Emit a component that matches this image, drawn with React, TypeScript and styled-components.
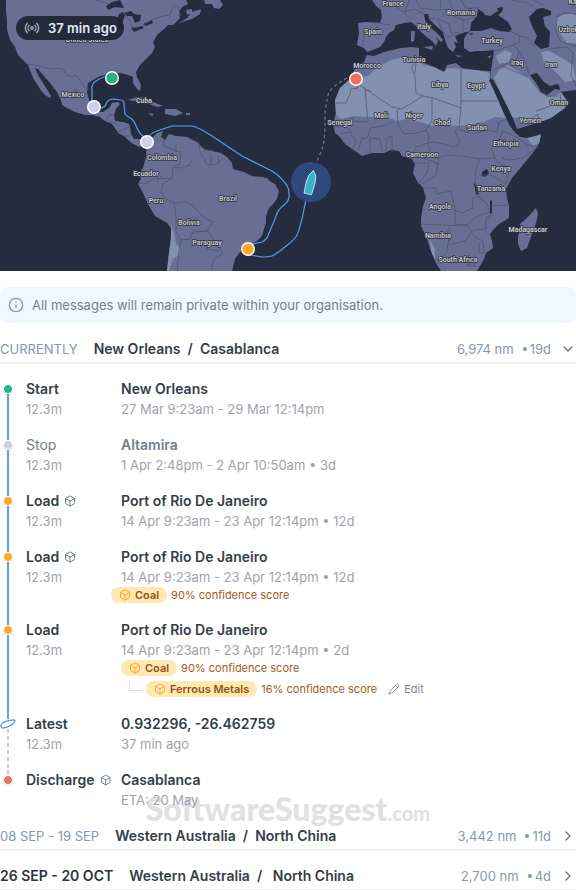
import React from "react";
import styled, { createGlobalStyle, css } from "styled-components";
import { Box, ChevronDown, ChevronRight, Info, Pencil, Radio } from "lucide-react";

const GlobalStyle = createGlobalStyle`
  * { box-sizing: border-box; }
  body {
    margin: 0;
    background: #ffffff;
    color: #37424d;
    font-family: Inter, "Liberation Sans", sans-serif;
    font-size: 14px;
    line-height: 20px;
  }
  button {
    border: 0;
    padding: 0;
    background: none;
    font: inherit;
    color: inherit;
    text-align: left;
    cursor: pointer;
  }
`;

/* ---------- Map ---------- */

const MapPanel = styled.section`
  position: relative;
  overflow: hidden;
  background: #262c3f;
`;

const MapDrawing = styled.svg`
  display: block;
  width: 100%;
  height: auto;
`;

const Land = styled.path`
  fill: #696f94;
`;

const Desert = styled.path`
  fill: #8490b0;
`;

const Water = styled.path`
  fill: #262c3f;
`;

const Border = styled.path`
  fill: none;
  stroke: #4a506b;
  stroke-width: 0.7;
  stroke-linejoin: round;
`;

const Route = styled.path<{ $planned?: boolean }>`
  fill: none;
  stroke: ${(p) => (p.$planned ? "#777c83" : "#5a9ae8")};
  stroke-width: 1.2;
  stroke-linejoin: round;
  stroke-dasharray: ${(p) => (p.$planned ? "3 3" : "none")};
`;

const Port = styled.circle`
  stroke: #ffffff;
  stroke-width: 1.4;
`;

const Country = styled.text`
  font-family: Roboto, sans-serif;
  font-size: 7px;
  font-weight: 700;
  fill: #c6c6c9;
  stroke: #2b2f3d;
  stroke-width: 1.5;
  stroke-linejoin: round;
  paint-order: stroke;
  text-anchor: middle;
`;

const UpdatedPill = styled.div`
  position: absolute;
  top: 16px;
  left: 16px;
  display: flex;
  align-items: center;
  gap: 8px;
  height: 24px;
  padding: 0 7px 0 8px;
  border-radius: 12px;
  background: rgba(31, 37, 52, 0.93);
  color: #e3edf8;
  font-size: 13px;
  font-weight: 600;
  svg { color: #a3b6cd; }
`;

const countries: [string, number, number][] = [
  ["United States", 87, 42],
  ["Mexico", 73, 97],
  ["Cuba", 144, 103],
  ["Colombia", 162, 160],
  ["Ecuador", 146, 176],
  ["Peru", 156, 203],
  ["Brazil", 228, 201],
  ["Bolivia", 189, 225],
  ["Paraguay", 207, 245],
  ["France", 393, 6],
  ["Spain", 373, 34],
  ["Italy", 424, 29],
  ["Romania", 461, 15],
  ["Turkey", 492, 43],
  ["Morocco", 367, 68],
  ["Tunisia", 414, 62],
  ["Libya", 440, 87],
  ["Egypt", 476, 88],
  ["Iraq", 517, 65],
  ["Iran", 551, 67],
  ["Uzbekistan", 576, 32],
  ["Kazakhstan", 587, 4],
  ["Oman", 559, 105],
  ["Yemen", 530, 123],
  ["Mali", 381, 118],
  ["Niger", 414, 118],
  ["Chad", 442, 125],
  ["Sudan", 477, 130],
  ["Senegal", 340, 125],
  ["Ethiopia", 506, 146],
  ["Cameroon", 422, 157],
  ["Kenya", 501, 171],
  ["Tanzania", 491, 191],
  ["Angola", 440, 209],
  ["Namibia", 438, 238],
  ["Madagascar", 528, 232],
  ["South Africa", 458, 262],
];

function VoyageMap() {
  return (
    <MapPanel>
      <MapDrawing viewBox="0 0 576 271" role="img" aria-label="Voyage map">
        {/* North and Central America */}
        <Land d="M6 0 6 10 7 20 7 30 10 40 15 47 18 55 23 60 28 65 30 70 33 78 37 84 40 89 45 95 50 98 51 96 48 91 43 83 38 75 35 68 38 69 43 75 50 83 57 92 61 100 62 105 67 108 75 112 85 115 93 115 100 117 105 121 112 124 115 128 118 133 124 136 128 140 133 144 140 147 145 145 141 139 134 139 131 134 130 127 129 124 123 122 115 121 114 115 116 109 120 104 118 102 112 103 109 108 103 112 97 112 92 107 89 100 87 92 88 83 93 80 100 76 110 74 120 73 128 75 133 77 133 83 137 89 140 91 141 85 137 77 136 72 140 65 147 58 152 53 155 47 153 42 157 35 163 30 168 25 173 25 178 20 180 18 179 12 182 7 188 4 186 0Z" />
        <Land d="M178 24 187 18 192 12 201 9 200 14 192 19 185 21ZM204 0 205 4 212 4 214 8 219 9 223 5 220 0ZM186 10 192 9 192 13 187 15ZM128 100 137 97 146 98 153 102 163 106 157 107 144 102 134 101ZM165 109 176 109 183 113 176 116 165 114ZM148 113 154 114 152 116ZM186 113 190 113 190 115 186 115Z" />
        <Water d="M106 6 112 2 120 0 124 8 115 7 108 10ZM119 14 123 12 125 15 121 28 117 30 117 19ZM124 13 131 11 134 14 141 15 140 21 135 23 132 16 127 16ZM131 28 142 26 144 28 134 32ZM143 24 152 20 153 23 146 26Z" />
        <Border d="M28 64 35 65 50 69 62 68 67 75 72 77 76 75 81 82 84 87 89 89M96 0 109 4M124 13 128 18 133 28 143 26 151 20 163 16 170 15 173 7 177 5 181 16M97 113 100 117M105 121 109 115 115 115M109 122 115 123 120 126M118 132 124 129 129 127M124 136 130 136" />

        {/* South America */}
        <Land d="M147 140 152 138 157 133 163 131 161 137 165 140 169 134 176 136 187 137 197 142 204 149 212 151 221 153 227 157 232 163 233 169 244 172 252 176 262 177 267 178 271 182 275 184 279 191 277 199 273 204 269 208 266 216 266 223 264 229 262 236 257 241 247 246 243 249 240 252 235 259 232 271 167 271 169 253 171 236 171 228 167 223 155 216 148 204 143 193 138 184 141 179 139 174 143 168 146 157Z" />
        <Desert d="M171 225 174 233 176 244 180 248 179 255 173 259 169 271 167 271 169 253 171 240Z" />
        <Border d="M163 137 164 146 176 151 181 152 180 164 173 167 172 178 153 179 145 184 139 183M173 167 182 168 189 165 192 160M172 178 163 184 161 191 165 198 174 203 176 216 176 232 181 240 190 239 193 232 207 231 213 222 207 219 201 215 193 206 185 201 183 202 174 203M199 142 200 153 205 160 207 165 217 164 224 158M203 151 212 150M211 164 211 154M219 164 218 156M195 232 208 231 213 239 220 247 222 254 214 259 211 270M181 240 179 250 177 271M207 243 207 249 219 251M176 151 176 143M157 181 162 175" />

        {/* Europe and western Asia */}
        <Land d="M372 0 376 6 381 10 382 17 380 23 366 22 358 23 359 33 357 45 364 48 367 52 373 50 380 47 384 42 386 37 389 33 394 30 396 25 404 23 411 22 416 26 421 32 427 37 433 42 436 46 438 41 436 37 441 42 443 40 438 34 430 27 425 20 424 14 428 14 429 19 436 26 443 32 445 40 448 48 453 52 456 47 454 42 458 43 455 36 463 33 470 31 466 35 464 39 464 48 470 52 477 51 484 51 494 50 493 58 491 70 490 78 493 80 499 91 505 103 512 116 517 129 531 125 551 118 566 107 567 100 560 92 576 90 576 0ZM411 31 415 31 414 41 411 42ZM423 47 433 46 432 50ZM455 55 463 56 458 57ZM487 57 492 55 490 58Z" />
        <Water d="M470 31 471 23 477 16 478 9 483 12 485 15 490 16 498 11 497 8 503 7 502 12 498 15 508 22 512 29 509 32 499 31 491 28 481 31ZM468 34 473 33 472 35ZM529 17 537 9 543 8 551 11 551 15 543 17 545 26 550 32 549 47 541 49 534 43 537 36 532 26ZM530 75 537 73 544 82 550 86 557 84 559 85 560 90 555 89 547 95 541 92 538 86Z" />

        {/* Africa */}
        <Land d="M367 55 364 62 355 68 352 75 349 80 340 88 335 100 336 113 333 124 335 133 339 136 345 144 355 151 362 156 372 153 384 153 391 150 399 151 402 156 412 159 415 164 413 173 417 181 423 188 426 198 423 206 421 218 421 226 426 236 431 251 436 263 441 271 477 271 484 259 486 253 493 248 492 241 490 234 493 230 499 224 509 218 509 206 507 198 506 189 512 178 522 166 532 154 539 144 541 134 528 138 520 137 515 132 510 126 506 118 501 105 496 92 490 82 490 71 474 70 462 68 456 63 447 65 444 72 434 67 424 63 419 58 419 48 412 47 401 48 384 52 374 56ZM536 208 538 214 536 223 532 234 527 248 521 251 518 244 518 236 521 229 520 224 527 218Z" />
        <Desert d="M349 80 358 78 368 76 374 70 385 63 394 59 408 57 417 61 424 65 434 67 444 72 448 68 462 69 476 70 490 73 489 79 496 92 501 105 506 118 495 117 484 122 459 126 446 125 432 126 421 122 407 119 397 121 387 117 366 117 354 116 341 119 336 115 335 100 340 88Z" />
        <Desert d="M494 78 499 70 508 65 514 69 528 77 534 85 539 92 548 97 556 96 561 92 567 101 565 108 551 118 540 122 525 119 512 117 507 106 500 93ZM496 56 505 50 512 53 509 62 499 64ZM541 52 549 51 560 57 573 65 576 80 565 82 556 72 544 63ZM556 19 562 15 572 13 576 15 576 43 567 43 561 35 556 29ZM527 138 541 135 539 143 533 146ZM430 239 435 249 435 260 431 251Z" />
        <Water d="M482 172 487 169 489 173 485 177 482 176ZM474 183 476 184 479 194 476 195ZM490 200 492 201 492 214 490 213ZM489 80 493 80 499 90 506 104 512 117 517 130 516 134 508 122 501 107 495 93Z" />
        <Border d="M354 80 358 79 358 88 351 89 350 94 346 103 336 103M358 84 392 107 402 109 423 96 416 93 415 76 411 67 417 62M365 90 368 122 348 121M365 90 371 91M423 96 433 98 461 108 461 69M461 101 498 101M416 64 415 73M432 98 432 120 426 130 418 133 404 134 398 124 397 111 400 108M461 108 459 127 455 131 460 142 454 147 444 144 434 142 428 143 429 137 426 130M335 127 345 126 352 132M340 134 350 132 356 142 352 150M358 151 362 139 368 137 370 128 383 126 393 122M370 153 370 138 380 139 382 152M386 151 387 138 392 136 392 151M412 158 416 147 428 143 430 151 423 158 439 164M413 163 429 163 427 173 418 184M439 158 436 175 423 184M439 158 447 155 462 156 469 157 480 159 476 169 475 183 479 197 472 198 473 208 462 213 455 210 451 191 437 194 435 188 423 188M455 210 455 224 467 225 476 217 490 212 487 204 479 197M420 224 442 225 467 226M449 226 449 239 446 254 437 260M449 245 465 241 473 230 486 229 486 218 491 215M467 225 475 237 483 241 484 253 479 253 479 242M467 265 474 261 475 266ZM480 159 495 158 501 165 510 167 506 183M479 175 491 175 506 184M491 206 508 205M495 158 491 147 499 140 503 131 516 137 528 145 538 147 523 158 510 160 501 158M459 130 474 134 486 130 497 132 499 122 507 119" />
        <Border d="M493 70 502 66 528 77M502 66 517 59 519 51 513 45 495 51M519 51 525 61 529 74M513 45 520 42 519 35 509 31M536 111 545 108 561 101 560 94M520 121 529 121 537 114 540 121M543 89 546 96 558 96M548 49 567 47 573 53 571 75 576 86M373 22 390 25M365 28 363 45M396 8 404 12 411 20M404 12 415 9 424 14M416 0 420 8 435 10 450 9 455 17 464 20 477 17M441 0 440 8M449 0 452 9M461 0 466 8 478 8M429 18 438 19 449 24 451 33 462 33M438 19 441 29 447 37 455 35M446 10 442 17M463 20 463 31M556 17 565 13 576 14M557 18 556 32 561 42 576 46M512 0 528 3 536 9M533 0 545 6M393 1 398 9M409 0 405 12M519 36 528 38 535 47" />

        {countries.map(([name, x, y]) => (
          <Country key={name} x={x} y={y}>
            {name}
          </Country>
        ))}

        <Route d="M112 76Q102 76 96 81 91 84 92 90L92 107 101 108Q105 108 107 102 109 99 114 99L121 100Q124 100 124 104L125 114Q127 117 132 119 135 122 137 128 140 135 147 139 149 134 157 131L172 126 192 126Q198 127 212 136L242 156 272 171Q281 177 285 183 289 187 289 194 290 200 284 205 277 210 275 219L269 233Q267 240 262 242L248 245 250 255 262 257Q268 257 272 256 276 254 280 251L291 242Q298 237 300 226 303 216 304 209L307 195" />
        <Route $planned d="M315 166 320 154Q325 145 325 125L325 113Q327 97 329 92 333 86 347 78" />
        <circle cx="311" cy="182" r="20" fill="#30497d" />
        <path d="M313.5 170.5 315.8 176 315 183 311.5 194.8 304 193 306.5 181 309 175Z" fill="#33b4cb" stroke="#e6f2f7" strokeWidth="0.8" strokeLinejoin="round" />
        <Port cx="112" cy="78" r="6.3" fill="#22b284" />
        <Port cx="94" cy="107" r="6.3" fill="#cdd2ea" />
        <Port cx="147" cy="142" r="6.3" fill="#cdd2ea" />
        <Port cx="248" cy="249" r="6.3" fill="#ffa726" />
        <Port cx="356" cy="79" r="6.3" fill="#ec7063" />
      </MapDrawing>
      <UpdatedPill>
        <Radio size={16} strokeWidth={1.8} />
        37 min ago
      </UpdatedPill>
    </MapPanel>
  );
}

/* ---------- Banner and voyage headings ---------- */

const Banner = styled.p`
  display: flex;
  align-items: center;
  gap: 8px;
  margin: 16px 0 1px;
  padding: 8px;
  border-radius: 6px;
  background: #eff7ff;
  color: #76808d;
  font-size: 13px;
  svg { color: #8598bf; }
`;

const VoyageHeading = styled.button`
  display: flex;
  align-items: center;
  gap: 16px;
  width: 100%;
  padding: 15px 0 3px;
  border-bottom: 2px solid #f0f0f1;
  white-space: nowrap;
  &:last-child { border-bottom-width: 1px; }
`;

const VoyageDates = styled.span<{ $strong?: boolean }>`
  color: ${(p) => (p.$strong ? "#2d363f" : "#8496b6")};
  font-size: ${(p) => (p.$strong ? "14px" : "13px")};
  font-weight: ${(p) => (p.$strong ? 600 : 400)};
`;

const VoyageTitle = styled.span`
  flex: 1;
  color: #343e48;
  font-weight: 600;
  white-space: pre;
`;

const VoyageStats = styled.span`
  display: flex;
  align-items: center;
  gap: 9px;
  color: #8496b6;
  font-size: 13px;
  svg { color: #66738f; }
`;

const Duration = styled.span`
  display: flex;
  align-items: center;
  gap: 3px;
  &::before {
    content: "";
    width: 4px;
    height: 4px;
    border-radius: 50%;
    background: #7f95bb;
  }
`;

type VoyageProps = {
  dates: string;
  title: string;
  distance: string;
  duration: string;
  open?: boolean;
  strong?: boolean;
};

function Voyage({ dates, title, distance, duration, open = false, strong }: VoyageProps) {
  const Chevron = open ? ChevronDown : ChevronRight;
  return (
    <VoyageHeading type="button" aria-expanded={open}>
      <VoyageDates $strong={strong}>{dates}</VoyageDates>
      <VoyageTitle>{title}</VoyageTitle>
      <VoyageStats>
        <span>{distance}</span>
        <Duration>{duration}</Duration>
        <Chevron size={16} strokeWidth={2} />
      </VoyageStats>
    </VoyageHeading>
  );
}

/* ---------- Timeline ---------- */

const TimelineArea = styled.div`
  position: relative;
  z-index: 0;
`;

const Timeline = styled.ol`
  margin: 0;
  padding: 15px 0 1px;
  list-style: none;
`;

const Event = styled.li`
  display: grid;
  grid-template-columns: 16px 85px 1fr;
  column-gap: 10px;
`;

const Marker = styled.div`
  display: flex;
  flex-direction: column;
  align-items: center;
  svg { flex: none; }
`;

type RailKind = "sailed" | "planned" | "none";

const Rail = styled.span<{ $kind: RailKind; $lead?: boolean }>`
  width: 2px;
  ${(p) => (p.$lead ? css`height: 5px;` : css`flex: 1;`)}
  background: ${(p) =>
    p.$kind === "sailed"
      ? "#5f9fe6"
      : p.$kind === "planned"
        ? "repeating-linear-gradient(#c9c9cf 0 4px, transparent 4px 7px)"
        : "transparent"};
`;

const Dot = styled.span<{ $color: string }>`
  width: 10px;
  height: 10px;
  border: 1px solid #ffffff;
  border-radius: 50%;
  background: ${(p) => p.$color};
  box-shadow: 0 1px 2px rgba(40, 50, 80, 0.16);
`;

const Cell = styled.div`
  padding-bottom: 16px;
  white-space: nowrap;
  ${Event}:last-child & { padding-bottom: 0; }
`;

const Heading = styled.div<{ $muted?: boolean; $light?: boolean }>`
  display: flex;
  align-items: center;
  gap: 5px;
  color: ${(p) => (p.$muted ? "#74808c" : "#343e48")};
  font-weight: ${(p) => (p.$light ? 400 : 600)};
  svg { color: #6f7a99; }
`;

const Detail = styled.div`
  color: #a1a1ae;
  font-size: 13px;
`;

const CargoList = styled.ul<{ $outdent?: boolean }>`
  display: grid;
  gap: 5px;
  margin: 0 0 0 ${(p) => (p.$outdent ? "-10px" : "0")};
  padding: 0 0 1px;
  list-style: none;
`;

const CargoItem = styled.li`
  display: flex;
  align-items: center;
  gap: 4px;
  height: 16px;
  color: #a25b17;
  font-size: 11px;
  line-height: 16px;
`;

const CargoChip = styled.span`
  display: flex;
  align-items: center;
  gap: 4px;
  height: 16px;
  padding: 0 8px;
  border-radius: 8px;
  background: #ffe9b3;
  color: #96500f;
  font-weight: 600;
  svg { color: #ffa62b; }
`;

const Branch = styled.span`
  align-self: flex-start;
  width: 13px;
  height: 10px;
  margin-left: 8px;
  border-left: 1px solid #dcdce0;
  border-bottom: 1px solid #dcdce0;
`;

const EditButton = styled.button`
  display: flex;
  align-items: center;
  gap: 4px;
  margin-left: 7px;
  color: #7c8797;
`;

const Watermark = styled.div`
  position: absolute;
  z-index: -1;
  bottom: -18px;
  left: 0;
  right: 0;
  color: #e1e1e1;
  font-family: Lato, Inter, sans-serif;
  font-size: 32px;
  font-weight: 900;
  line-height: 32px;
  text-align: center;
  pointer-events: none;
  small { font-size: 20px; }
`;

type Cargo = { name: string; score: string; nested?: boolean };

type EventData = {
  kind: string;
  place: string;
  detail: string;
  draught?: string;
  color?: string;
  boxed?: boolean;
  muted?: boolean;
  cargo?: Cargo[];
  outdent?: boolean;
  before: RailKind;
  after: RailKind;
};

const rio = "Port of Rio De Janeiro";

const events: EventData[] = [
  { kind: "Start", place: "New Orleans", detail: "27 Mar 9:23am - 29 Mar 12:14pm", draught: "12.3m", color: "#22b284", before: "none", after: "sailed" },
  { kind: "Stop", place: "Altamira", detail: "1 Apr 2:48pm - 2 Apr 10:50am • 3d", draught: "12.3m", color: "#c9cee8", muted: true, before: "sailed", after: "sailed" },
  { kind: "Load", place: rio, detail: "14 Apr 9:23am - 23 Apr 12:14pm • 12d", draught: "12.3m", color: "#ffa726", boxed: true, before: "sailed", after: "sailed" },
  { kind: "Load", place: rio, detail: "14 Apr 9:23am - 23 Apr 12:14pm • 12d", draught: "12.3m", color: "#ffa726", boxed: true, before: "sailed", after: "sailed", outdent: true, cargo: [{ name: "Coal", score: "90%" }] },
  { kind: "Load", place: rio, detail: "14 Apr 9:23am - 23 Apr 12:14pm • 2d", draught: "12.3m", color: "#ffa726", before: "sailed", after: "sailed", cargo: [{ name: "Coal", score: "90%" }, { name: "Ferrous Metals", score: "16%", nested: true }] },
  { kind: "Latest", place: "0.932296, -26.462759", detail: "37 min ago", draught: "12.3m", before: "sailed", after: "planned" },
  { kind: "Discharge", place: "Casablanca", detail: "ETA: 20 May", color: "#ec7063", boxed: true, before: "planned", after: "none" },
];

function ShipMarker() {
  return (
    <svg width="16" height="10" viewBox="0 0 16 10" aria-hidden="true">
      <path d="M.8 6.6 2.6 3.9 8 1.7 13.8.9Q15.3 1 14.8 2.6L12.6 5.4 8 7.8 3.2 9.2Q1 9 .8 6.6Z" fill="#ffffff" stroke="#5b95ee" strokeWidth="1.2" strokeLinejoin="round" />
    </svg>
  );
}

function TimelineEvent({ event }: { event: EventData }) {
  return (
    <Event>
      <Marker>
        <Rail $lead $kind={event.before} />
        {event.color ? <Dot $color={event.color} /> : <ShipMarker />}
        <Rail $kind={event.after} />
      </Marker>
      <Cell>
        <Heading $muted={event.muted} $light={event.muted}>
          {event.kind}
          {event.boxed && <Box size={12} strokeWidth={2} />}
        </Heading>
        {event.draught && <Detail>{event.draught}</Detail>}
      </Cell>
      <Cell>
        <Heading $muted={event.muted}>{event.place}</Heading>
        <Detail>{event.detail}</Detail>
        {event.cargo && (
          <CargoList $outdent={event.outdent}>
            {event.cargo.map((item) => (
              <CargoItem key={item.name}>
                {item.nested && <Branch />}
                <CargoChip>
                  <Box size={12} strokeWidth={2} />
                  {item.name}
                </CargoChip>
                <span>{item.score} confidence score</span>
                {item.nested && (
                  <EditButton type="button">
                    <Pencil size={12} strokeWidth={1.8} />
                    Edit
                  </EditButton>
                )}
              </CargoItem>
            ))}
          </CargoList>
        )}
      </Cell>
    </Event>
  );
}

export default function App() {
  return (
    <>
      <GlobalStyle />
      <main>
        <VoyageMap />
        <Banner>
          <Info size={16} strokeWidth={2} />
          All messages will remain private within your organisation.
        </Banner>
        <Voyage dates="CURRENTLY" title="New Orleans  /  Casablanca" distance="6,974 nm" duration="19d" open />
        <TimelineArea>
          <Timeline>
            {events.map((event, index) => (
              <TimelineEvent key={index} event={event} />
            ))}
          </Timeline>
          <Watermark>
            SoftwareSuggest<small>.com</small>
          </Watermark>
        </TimelineArea>
        <Voyage dates="08 SEP - 19 SEP" title="Western Australia  /  North China" distance="3,442 nm" duration="11d" />
        <Voyage dates="26 SEP - 20 OCT" title="Western Australia  /   North China" distance="2,700 nm" duration="4d" strong />
      </main>
    </>
  );
}
